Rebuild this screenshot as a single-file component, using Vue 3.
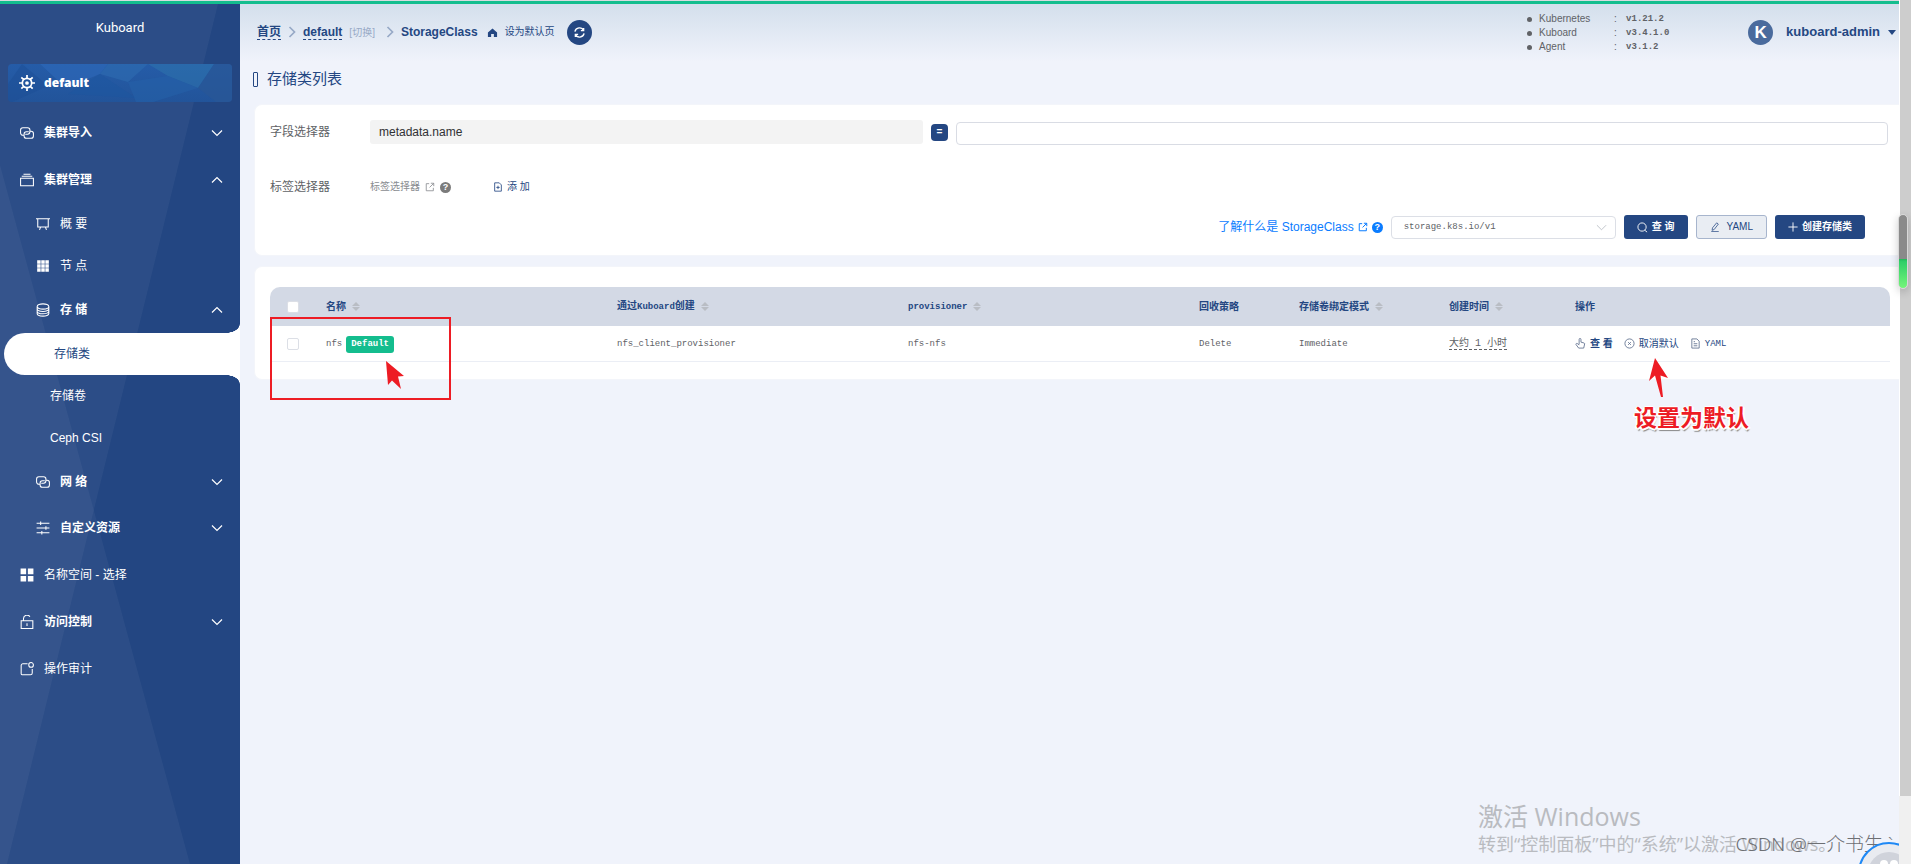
<!-- src\views\StorageClassList.vue -->

<!-- storage class list page: sidebar menu, breadcrumb header, filter card + table -->

<template>
  <div class="page">
    <div class="app-shell">
      <div class="progress"></div>

      <div class="layout">
        <!-- left menu -->
        <aside class="sidebar">
          <svg class="sidebar-bg" viewBox="0 0 240 860" preserveAspectRatio="none" aria-hidden="true">
            <path d="M0 0H218L7 860H0Z" />
            <path d="M0 161L190 860H0Z" />
          </svg>

          <div class="brand">Kuboard</div>

          <a class="cluster" href="#">
            <svg class="cluster-bg" viewBox="0 0 224 38" preserveAspectRatio="none" aria-hidden="true">
              <path d="M32 0H100L92 10L58 24Z" fill="#2f6bbd" opacity=".5" />
              <path d="M100 0H140L120 18L92 10Z" fill="#3070b4" opacity=".5" />
              <path d="M92 10L128 34L60 30Z" fill="#1c559f" opacity=".5" />
              <path d="M140 0H206L190 24L160 12Z" fill="#3079b0" opacity=".45" />
              <path d="M120 18L160 12L190 24L145 38H128Z" fill="#2461a8" opacity=".6" />
              <path d="M206 0H224V38H208L190 24Z" fill="#2a5796" opacity=".7" />
              <path d="M0 20L14 0L40 22L4 38H0Z" fill="#1c4d96" opacity=".5" />
            </svg>
            <Icon name="helm" :size="16" :stroke="2.6" />
            <span>default</span>
          </a>

          <nav class="menu">
            <a
              v-for="item in menu"
              :key="item.label"
              href="#"
              class="menu-item"
              :class="['level-' + item.level, { group: item.group, active: item.active, bold: item.bold }]"
            >
              <Icon v-if="item.icon" :name="item.icon" :size="14" :stroke="1.8" />
              <span class="menu-label">{{ item.label }}</span>
              <Icon v-if="item.arrow" class="arrow" :name="item.arrow" :size="12" :stroke="2.4" />
            </a>
          </nav>
        </aside>

        <!-- right content -->
        <main class="content">
          <header class="header">
            <nav class="breadcrumb">
              <a class="crumb dashed" href="#">首页</a>
              <Icon class="sep" name="right" :size="12" :stroke="3.4" />
              <a class="crumb dashed" href="#">default</a>
              <a class="switch" href="#">[切换]</a>
              <Icon class="sep" name="right" :size="12" :stroke="3.4" />
              <span class="crumb">StorageClass</span>
              <a class="set-home" href="#"><Icon name="home" :size="11" :stroke="1" />设为默认页</a>
              <button class="refresh" type="button" aria-label="刷新">
                <Icon name="refresh" :size="11" :stroke="3" />
              </button>
            </nav>

            <ul class="versions">
              <li v-for="v in versions" :key="v.name">
                <span class="v-name">{{ v.name }}</span>
                <span class="v-colon">:</span>
                <span class="v-value mono">{{ v.value }}</span>
              </li>
            </ul>

            <button class="user" type="button">
              <span class="avatar">K</span>
              <span>kuboard-admin</span>
              <span class="caret"></span>
            </button>
          </header>

          <h1 class="title">存储类列表</h1>

          <!-- filters -->
          <section class="card filters">
            <div class="row">
              <label class="row-label" for="field-name">字段选择器</label>
              <input id="field-name" class="field-name" type="text" value="metadata.name" readonly />
              <button class="equals" type="button">=</button>
              <input v-model="fieldValue" class="field-value" type="text" aria-label="metadata.name" />
            </div>

            <div class="row label-row">
              <span class="row-label">标签选择器</span>
              <a class="hint" href="#">
                标签选择器
                <Icon name="external" :size="10" :stroke="2" />
                <span class="question">?</span>
              </a>
              <button class="add" type="button"><Icon name="fileAdd" :size="10" :stroke="2" />添 加</button>
            </div>

            <div class="row actions">
              <a class="learn" href="#">
                了解什么是 StorageClass
                <Icon name="external" :size="10" :stroke="2.4" />
                <span class="question">?</span>
              </a>
              <span class="select-wrap">
                <select v-model="apiVersion" class="mono" aria-label="apiVersion">
                  <option>storage.k8s.io/v1</option>
                </select>
                <Icon name="down" :size="11" :stroke="1.8" />
              </span>
              <button class="btn primary" type="button"><Icon name="search" :size="11" :stroke="2" />查 询</button>
              <button class="btn plain" type="button"><Icon name="edit" :size="10" :stroke="1.8" />YAML</button>
              <button class="btn primary" type="button"><Icon name="plus" :size="10" :stroke="2.2" />创建存储类</button>
            </div>
          </section>

          <!-- table -->
          <section class="card list">
            <table>
              <colgroup>
                <col class="col-check" />
                <col />
                <col />
                <col />
                <col class="col-policy" />
                <col class="col-mode" />
                <col class="col-time" />
                <col class="col-ops" />
              </colgroup>
              <thead>
                <tr>
                  <th class="check"><input type="checkbox" aria-label="全选" /></th>
                  <th v-for="col in columns" :key="col.key">
                    <span class="th-inner">
                      <span>
                        <span v-for="part in col.parts" :key="part" :class="{ mono: isLatin(part) }">{{ part }}</span>
                      </span>
                      <span v-if="col.sortable" class="sorter"></span>
                    </span>
                  </th>
                </tr>
              </thead>
              <tbody>
                <tr v-for="row in rows" :key="row.name">
                  <td class="check"><input type="checkbox" :aria-label="row.name" /></td>
                  <td>
                    <span class="mono">{{ row.name }}</span>
                    <span v-if="row.isDefault" class="tag mono">Default</span>
                  </td>
                  <td class="mono">{{ row.createdBy }}</td>
                  <td class="mono">{{ row.provisioner }}</td>
                  <td class="mono">{{ row.policy }}</td>
                  <td class="mono">{{ row.mode }}</td>
                  <td><span class="age">{{ row.age }}</span></td>
                  <td>
                    <span class="ops">
                      <button type="button" class="strong"><Icon name="pointer" :size="11" :stroke="1.8" />查 看</button>
                      <button type="button"><Icon name="circleX" :size="11" :stroke="1.8" />取消默认</button>
                      <button type="button" class="mono"><Icon name="file" :size="11" :stroke="1.8" />YAML</button>
                    </span>
                  </td>
                </tr>
              </tbody>
            </table>
          </section>

          <!-- annotations on top of the table -->
          <div class="mark-box"></div>
          <svg class="mark-cursor" width="18" height="28" viewBox="0 0 18 28" aria-hidden="true">
            <path d="M0 0L18 15L12 15.5L15 28L6 19.500L2 24Z" />
          </svg>
          <div class="mark-note">
            <svg width="20" height="39" viewBox="0 0 20 39" aria-hidden="true">
              <path d="M6 0L19 20L11.500 17.500L14 39H12L6 17.500L0 23Z" />
            </svg>
            <span>设置为默认</span>
          </div>

          <div class="activate">
            <p class="activate-title">激活 Windows</p>
            <p class="activate-text">转到“控制面板”中的“系统”以激活 Windows。</p>
          </div>
          <p class="credit">CSDN @一介书生 `</p>
          <div class="bubble">
            <svg width="40" height="22" viewBox="0 0 40 22" aria-hidden="true">
              <circle cx="30" cy="31" r="30" fill="#e9ebf0" stroke="#1e88f5" stroke-width="2" />
              <circle cx="30" cy="31" r="21" fill="#d0d3db" />
              <circle cx="25" cy="22" r="4" fill="#fff" />
              <circle cx="35" cy="22" r="4" fill="#fff" />
            </svg>
          </div>
        </main>
      </div>
    </div>

    <div class="scrollbar">
      <div class="scroll-thumb"></div>
      <div class="meter"></div>
    </div>
  </div>
</template>

<script setup>
import { h, ref } from 'vue'

// icon outlines on a 24x24 grid, `fill` ones are solid
const icons = {
  helm: { d: 'M12 5a7 7 0 1 0 0 14a7 7 0 1 0 0-14M12 10.500a1.500 1.500 0 1 0 0 3a1.500 1.500 0 1 0 0-3M12 0v5M12 19v5M0 12h5M19 12h5M3.500 3.500l3.500 3.500M17 17l3.500 3.500M20.500 3.500L17 7M7 17l-3.500 3.500' },
  link: { d: 'M7 16H5a4 4 0 0 1-4-4V7a4 4 0 0 1 4-4h8a4 4 0 0 1 4 4v3a4 4 0 0 1-4 4H9M17 9h2a4 4 0 0 1 4 4v4a4 4 0 0 1-4 4h-8a4 4 0 0 1-4-4v-3a4 4 0 0 1 4-4h4' },
  box: { d: 'M1 9H23V22H1ZM3 5.500H21M6 2H18' },
  board: { d: 'M0 3H24M3 3V17H21V3M8 17L6 22M16 17L18 22' },
  grid: { d: 'M2 2h6v6H2zM9 2h6v6H9zM16 2h6v6h-6zM2 9h6v6H2zM9 9h6v6H9zM16 9h6v6h-6zM2 16h6v6H2zM9 16h6v6H9zM16 16h6v6h-6z', fill: true },
  coin: { d: 'M2 6c0-6 20-6 20 0s-20 6-20 0V18c0 6 20 6 20 0V6M2 10c0 6 20 6 20 0M2 14c0 6 20 6 20 0' },
  sliders: { d: 'M1 4H23M1 12H23M1 20H23M8 1v6M17 9v6M10 17v6' },
  menu: { d: 'M1 1h9.500v9.500H1zM13.500 1H23v9.500h-9.500zM1 13.500h9.500V23H1zM13.500 13.500H23V23h-9.500z', fill: true },
  lock: { d: 'M2 10H22V23H2ZM6 10V6a6 6 0 0 1 11-3M12 14v5' },
  audit: { d: 'M13 3H5a3 3 0 0 0-3 3V20a2 2 0 0 0 2 2H18a3 3 0 0 0 3-3V12M19 1a4 4 0 1 0 0 8a4 4 0 1 0 0-8' },
  down: { d: 'M2 7L12 17L22 7' },
  up: { d: 'M2 17L12 7L22 17' },
  right: { d: 'M7 2L17 12L7 22' },
  home: { d: 'M12 3L2 12V22H9V15H15V22H22V12Z', fill: true },
  refresh: { d: 'M2 10A10 10 0 0 1 21 8M21 2V8H15M22 14A10 10 0 0 1 3 16M3 22V16H9' },
  external: { d: 'M10 4H3V21H20V14M14 3H21V10M21 3L11 13' },
  fileAdd: { d: 'M4 2H15L20 7V22H4ZM12 9V17M8 13H16' },
  file: { d: 'M4 2H15L20 7V22H4ZM8 8H11M8 12.500H16M8 17H16' },
  search: { d: 'M11 2a9 9 0 1 0 0 18a9 9 0 1 0 0-18M17 18L22 22' },
  edit: { d: 'M16 2L20 5L10 18L5 20L6 14ZM3 23H21' },
  plus: { d: 'M12 1V23M1 12H23' },
  pointer: { d: 'M9 14V3a2 2 0 0 1 4 0V9L20 11a2 2 0 0 1 1 2L19 22H8L2 14a2 2 0 0 1 3-2L9 15' },
  circleX: { d: 'M12 2a10 10 0 1 0 0 20a10 10 0 1 0 0-20M9 9L15 15M15 9L9 15' }
}

function Icon(props) {
  const icon = icons[props.name]
  return h('svg', { class: 'icon', width: props.size, height: props.size, viewBox: '0 0 24 24', 'aria-hidden': 'true' }, [
    h('path', {
      d: icon.d,
      fill: icon.fill ? 'currentColor' : 'none',
      stroke: icon.fill ? 'none' : 'currentColor',
      'stroke-width': props.stroke
    })
  ])
}
Icon.props = ['name', 'size', 'stroke']

const fieldValue = ref('')
const apiVersion = ref('storage.k8s.io/v1')

const menu = [
  { label: '集群导入', icon: 'link', level: 1, group: true, bold: true, arrow: 'down' },
  { label: '集群管理', icon: 'box', level: 1, group: true, bold: true, arrow: 'up' },
  { label: '概 要', icon: 'board', level: 2 },
  { label: '节 点', icon: 'grid', level: 2 },
  { label: '存 储', icon: 'coin', level: 2, group: true, bold: true, arrow: 'up' },
  { label: '存储类', level: 3, active: true },
  { label: '存储卷', level: 3 },
  { label: 'Ceph CSI', level: 3 },
  { label: '网 络', icon: 'link', level: 2, group: true, bold: true, arrow: 'down' },
  { label: '自定义资源', icon: 'sliders', level: 2, group: true, bold: true, arrow: 'down' },
  { label: '名称空间 - 选择', icon: 'menu', level: 1, group: true },
  { label: '访问控制', icon: 'lock', level: 1, group: true, bold: true, arrow: 'down' },
  { label: '操作审计', icon: 'audit', level: 1, group: true }
]

const versions = [
  { name: 'Kubernetes', value: 'v1.21.2' },
  { name: 'Kuboard', value: 'v3.4.1.0' },
  { name: 'Agent', value: 'v3.1.2' }
]

const columns = [
  { key: 'name', parts: ['名称'], sortable: true },
  { key: 'createdBy', parts: ['通过', 'Kuboard', '创建'], sortable: true },
  { key: 'provisioner', parts: ['provisioner'], sortable: true },
  { key: 'policy', parts: ['回收策略'] },
  { key: 'mode', parts: ['存储卷绑定模式'], sortable: true },
  { key: 'age', parts: ['创建时间'], sortable: true },
  { key: 'ops', parts: ['操作'] }
]

const rows = [
  {
    name: 'nfs',
    isDefault: true,
    createdBy: 'nfs_client_provisioner',
    provisioner: 'nfs-nfs',
    policy: 'Delete',
    mode: 'Immediate',
    age: '大约 1 小时'
  }
]

// latin parts of a header go in the monospace font
function isLatin(text) {
  return /^[a-z]+$/i.test(text)
}
</script>

<style>
body {
  margin: 0;
  background: #f0f3fb;
}
</style>

<style scoped>
.page {
  --navy: #244782;
  --text: #606266;
  --line: #dcdfe6;
  display: flex;
  min-height: 100vh;
  overflow: hidden;
  font-family: "Liberation Sans", "Noto Sans CJK SC", sans-serif;
  font-size: 12px;
  line-height: 16px;
  color: var(--text);
}

.page * {
  box-sizing: border-box;
}

a {
  color: inherit;
  text-decoration: none;
}

button,
input,
select {
  margin: 0;
  padding: 0;
  border: 0;
  background: none;
  color: inherit;
  font: inherit;
}

button {
  display: inline-flex;
  align-items: center;
  cursor: pointer;
}

.icon {
  flex: none;
  display: block;
}

.mono,
.page button.mono {
  font-family: "Liberation Mono", "Noto Sans CJK SC", monospace;
  font-size: 9px;
}

.app-shell {
  flex: 1;
  min-width: 0;
  display: flex;
  flex-direction: column;
}

.progress {
  height: 4px;
  border-top: 1px solid #d8dcdf;
  background: #14bd8e;
}

.layout {
  flex: 1;
  display: flex;
}

/* sidebar */
.sidebar {
  position: relative;
  width: 240px;
  flex: none;
  background: #234682;
  color: #fff;
}

.sidebar-bg {
  position: absolute;
  inset: 0;
  width: 100%;
  height: 100%;
}

.sidebar-bg path {
  fill: #fff;
  fill-opacity: 0.045;
}

.brand {
  position: relative;
  font: 13px/48px Roboto, sans-serif;
  text-align: center;
}

.cluster {
  position: relative;
  display: flex;
  align-items: center;
  gap: 9px;
  height: 38px;
  margin: 12px 8px 0;
  padding-left: 11px;
  border-radius: 4px;
  overflow: hidden;
  background: linear-gradient(#255ca8, #22549a);
  font-family: "Open Sans", sans-serif;
  font-weight: 800;
}

.cluster span,
.cluster .icon {
  position: relative;
}

.cluster-bg {
  position: absolute;
  inset: 0;
  width: 100%;
  height: 100%;
}

.menu {
  position: relative;
  padding-top: 7px;
}

.menu-item {
  position: relative;
  display: flex;
  align-items: center;
  gap: 10px;
  height: 42px;
  padding: 0 17px 0 20px;
}

.menu-item.group {
  height: 46px;
}

.menu-item.group.level-1 {
  height: 47px;
}

.menu-item.bold {
  font-weight: bold;
}

.level-2 {
  padding-left: 36px;
}

.level-3 {
  padding-left: 50px;
}

.arrow {
  margin-left: auto;
}

.menu-item.active {
  margin-left: 4px;
  border-radius: 21px 0 0 21px;
  background: #fff;
  color: var(--navy);
}

.menu-item.active::before,
.menu-item.active::after {
  content: "";
  position: absolute;
  right: 0;
  width: 14px;
  height: 9px;
}

.menu-item.active::before {
  bottom: 100%;
  background: radial-gradient(14px 9px at 0 0, transparent 96%, #fff 100%);
}

.menu-item.active::after {
  top: 100%;
  background: radial-gradient(14px 9px at 0 100%, transparent 96%, #fff 100%);
}

/* header */
.content {
  position: relative;
  flex: 1;
  min-width: 0;
  background: linear-gradient(#d3dfec, #f0f3fb 58px);
}

.header {
  display: flex;
  align-items: center;
  height: 56px;
  padding-left: 17px;
  color: var(--navy);
}

.breadcrumb {
  flex: 1;
  display: flex;
  align-items: center;
}

.crumb {
  font-weight: bold;
}

.dashed {
  border-bottom: 1px dashed var(--navy);
  line-height: 14px;
}

.sep {
  margin: 0 5px;
  color: #97a9c6;
}

.switch {
  margin: 2px 4px 0 7px;
  font-size: 10px;
  color: #97a9c6;
}

.set-home {
  display: flex;
  align-items: center;
  gap: 7px;
  margin-left: 9px;
  font-size: 10px;
}

.refresh {
  justify-content: center;
  width: 25px;
  height: 25px;
  margin-left: 12px;
  border-radius: 50%;
  background: var(--navy);
  color: #fff;
}

.versions {
  width: 221px;
  margin: 0;
  padding: 2px 0 0;
  list-style: none;
  font-size: 10px;
  line-height: 14px;
  color: var(--text);
}

.versions li {
  display: flex;
  align-items: center;
}

.versions li::before {
  content: "";
  width: 5px;
  height: 5px;
  margin-right: 7px;
  border-radius: 50%;
  background: var(--text);
}

.v-name {
  width: 75px;
}

.v-colon {
  width: 12px;
}

.v-value {
  font-weight: bold;
}

.user {
  margin-right: 3px;
  font-size: 13px;
  font-weight: bold;
}

.avatar {
  width: 25px;
  margin-right: 13px;
  border-radius: 50%;
  background: #4a6b9d;
  color: #fff;
  font-size: 17px;
  line-height: 25px;
  text-align: center;
}

.caret {
  margin-left: 8px;
  border: 4px solid transparent;
  border-top: 5px solid var(--navy);
  border-bottom: 0;
}

.title {
  display: flex;
  align-items: center;
  gap: 9px;
  height: 38px;
  margin: 0 0 6px 13px;
  font-size: 15px;
  font-weight: normal;
  color: var(--navy);
}

.title::before {
  content: "";
  width: 3px;
  height: 13px;
  border: 1px solid var(--navy);
  border-radius: 1px;
}

/* cards */
.card {
  margin: 0 0 10px 14px;
  border: 1px solid #f3f5fa;
  border-right: 0;
  border-radius: 8px 0 0 8px;
  background: #fff;
}

.filters {
  padding: 13px 11px 16px 15px;
}

.row {
  display: flex;
  align-items: center;
  height: 28px;
}

.row-label {
  width: 100px;
}

.field-name {
  flex: 549;
  min-width: 0;
  height: 24px;
  padding: 0 9px;
  border-radius: 3px;
  background: #f3f3f3;
  color: #303133;
}

.equals {
  justify-content: center;
  width: 17px;
  height: 17px;
  margin: 0 8px;
  border-radius: 4px;
  background: var(--navy);
  color: #fff;
  font-size: 10px;
  font-weight: bold;
}

.field-value {
  flex: 936;
  min-width: 0;
  height: 23px;
  margin-top: 3px;
  padding: 0 9px;
  border: 1px solid #d9dce4;
  border-radius: 4px;
}

.label-row {
  margin-top: 27px;
}

.hint {
  display: flex;
  align-items: center;
  gap: 5px;
  font-size: 10px;
  color: #8a8d91;
}

.question {
  width: 11px;
  border-radius: 50%;
  background: #7b7b7b;
  color: #fff;
  font-size: 9px;
  font-weight: bold;
  line-height: 11px;
  text-align: center;
}

.add {
  gap: 4px;
  margin-left: 42px;
  font-size: 10px;
  color: var(--navy);
}

.actions {
  justify-content: flex-end;
  gap: 8px;
  height: 24px;
  margin-top: 14px;
  padding-right: 23px;
}

.learn {
  display: flex;
  align-items: center;
  gap: 4px;
  color: #0a7cff;
}

.learn .question {
  background: #0a7cff;
}

.select-wrap {
  position: relative;
  width: 225px;
}

.select-wrap select {
  display: block;
  width: 100%;
  height: 23px;
  padding: 0 12px;
  appearance: none;
  border: 1px solid var(--line);
  border-radius: 4px;
  background: #fff;
}

.select-wrap .icon {
  position: absolute;
  top: 6px;
  right: 9px;
  color: #b4b8c0;
  pointer-events: none;
}

.btn {
  justify-content: center;
  gap: 4px;
  height: 24px;
  padding: 0 13px;
  border-radius: 3px;
  font-size: 10px;
}

.primary {
  background: var(--navy);
  color: #fff;
  font-weight: bold;
}

.plain {
  gap: 7px;
  border: 1px solid #a7b5cd;
  background: #e9edf3;
  color: var(--navy);
}

/* table */
.list {
  padding: 20px 9px 17px 15px;
}

table {
  width: 100%;
  table-layout: fixed;
  border-collapse: separate;
  border-spacing: 0;
  font-size: 10px;
}

.col-check {
  width: 46px;
}

.col-policy {
  width: 100px;
}

.col-mode {
  width: 150px;
}

.col-time {
  width: 126px;
}

.col-ops {
  width: 325px;
}

th,
td {
  padding: 0 10px;
  text-align: left;
  white-space: nowrap;
}

th {
  height: 39px;
  background: #d3d9e5;
  color: var(--navy);
}

th:first-child {
  border-radius: 10px 0 0 0;
}

th:last-child {
  border-radius: 0 10px 0 0;
}

td {
  height: 36px;
  border-bottom: 1px solid #ebeef5;
}

.page .check {
  padding-left: 17px;
}

.check input {
  display: block;
  width: 12px;
  height: 12px;
  appearance: none;
  border: 1px solid var(--line);
  border-radius: 2px;
  background: #fff;
}

.th-inner {
  display: flex;
  align-items: center;
  gap: 6px;
}

.sorter::before,
.sorter::after {
  content: "";
  display: block;
  border: 4px solid transparent;
}

.sorter::before {
  border-top: 0;
  border-bottom-color: #b9bdc4;
  margin-bottom: 1px;
}

.sorter::after {
  border-bottom: 0;
  border-top-color: #b9bdc4;
}

.tag {
  display: inline-block;
  margin-left: 4px;
  padding: 0 5px;
  border-radius: 3px;
  background: #14bd8e;
  color: #fff;
  font-weight: bold;
  line-height: 17px;
}

.age {
  font-family: "Liberation Mono", "Noto Sans CJK SC", monospace;
  border-bottom: 1px dashed var(--text);
}

.ops {
  display: flex;
  align-items: center;
  gap: 11px;
}

.ops button {
  gap: 4px;
  color: var(--navy);
}

.ops .strong {
  font-weight: bold;
}

.ops .icon {
  color: #5a6b8a;
}

/* annotations */
.mark-box {
  position: absolute;
  top: 313px;
  left: 30px;
  width: 181px;
  height: 83px;
  border: 2px solid #ed1c24;
}

.mark-cursor {
  position: absolute;
  top: 357px;
  left: 146px;
  fill: #ed1c24;
}

.mark-note {
  position: absolute;
  top: 354px;
  right: 150px;
  color: #ed1c24;
}

.mark-note svg {
  display: block;
  margin-left: 15px;
  fill: currentColor;
}

.mark-note span {
  display: block;
  padding-top: 8px;
  font-size: 23px;
  font-weight: bold;
  line-height: 26px;
  text-shadow: 1px 0 #fff, -1px 0 #fff, 0 1px #fff, 0 -1px #fff, 2px 1px #fff, -2px 1px #fff, 0 2px #fff, 1px 3px 1px #888;
}

.activate {
  position: absolute;
  right: 0;
  bottom: 8px;
  width: 421px;
  font-family: "Open Sans", "Noto Sans CJK SC", sans-serif;
  color: #b9bbc0;
}

.activate p {
  margin: 0;
  white-space: nowrap;
}

.activate-title {
  font-size: 25px;
  line-height: 32px;
}

.activate-text {
  font-size: 18px;
  line-height: 24px;
}

.credit {
  position: absolute;
  right: 6px;
  bottom: 8px;
  margin: 0;
  font-family: "Noto Sans", "Noto Sans CJK SC", sans-serif;
  font-size: 19px;
  font-weight: 300;
  line-height: 24px;
  color: #6d6f73;
}

.bubble {
  position: absolute;
  right: 0;
  bottom: 0;
}

.bubble svg {
  display: block;
}

/* window scrollbar */
.scrollbar {
  position: relative;
  flex: none;
  width: 12px;
  background: #f0f0f0;
}

.scroll-thumb {
  height: 796px;
  border-left: 1px solid #fff;
  background: #cdcdcd;
}

.meter {
  position: absolute;
  top: 214px;
  left: -1px;
  width: 10px;
  height: 75px;
  border: 1px solid #d8d8d8;
  border-radius: 5px;
  background: linear-gradient(#8a8a8a 60%, #22b858 60%, #2fcf68 64%, #75f57a);
  box-shadow: 0 3px 8px rgba(0, 0, 0, 0.2);
}
</style>
